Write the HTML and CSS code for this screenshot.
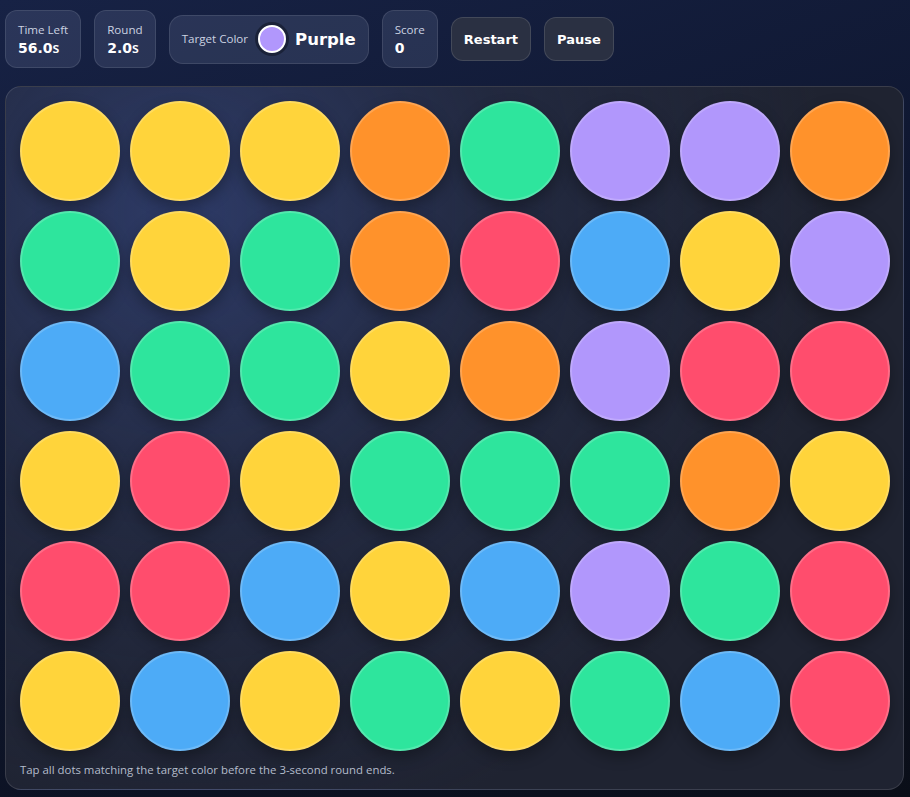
FILE: index.html
```html
<!doctype html>
<html lang="en">
<head>
    <meta charset="utf-8">
    <title>Color Tap</title>
    <link rel="stylesheet" href="styles.css">
</head>
<body>
    <div class="hud">
        <div class="stat">
            <div class="stat-label">Time Left</div>
            <div class="stat-value">56.0<small>s</small></div>
        </div>
        <div class="stat">
            <div class="stat-label">Round</div>
            <div class="stat-value">2.0<small>s</small></div>
        </div>
        <div class="target">
            <span class="stat-label">Target Color</span>
            <span class="target-swatch"></span>
            <span class="target-name">Purple</span>
        </div>
        <div class="stat">
            <div class="stat-label">Score</div>
            <div class="stat-value">0</div>
        </div>
        <button class="btn">Restart</button>
        <button class="btn">Pause</button>
    </div>

    <div class="board">
        <div class="grid">
            <div class="dot yellow"></div><div class="dot yellow"></div><div class="dot yellow"></div><div class="dot orange"></div><div class="dot green"></div><div class="dot purple"></div><div class="dot purple"></div><div class="dot orange"></div>
            <div class="dot green"></div><div class="dot yellow"></div><div class="dot green"></div><div class="dot orange"></div><div class="dot red"></div><div class="dot blue"></div><div class="dot yellow"></div><div class="dot purple"></div>
            <div class="dot blue"></div><div class="dot green"></div><div class="dot green"></div><div class="dot yellow"></div><div class="dot orange"></div><div class="dot purple"></div><div class="dot red"></div><div class="dot red"></div>
            <div class="dot yellow"></div><div class="dot red"></div><div class="dot yellow"></div><div class="dot green"></div><div class="dot green"></div><div class="dot green"></div><div class="dot orange"></div><div class="dot yellow"></div>
            <div class="dot red"></div><div class="dot red"></div><div class="dot blue"></div><div class="dot yellow"></div><div class="dot blue"></div><div class="dot purple"></div><div class="dot green"></div><div class="dot red"></div>
            <div class="dot yellow"></div><div class="dot blue"></div><div class="dot yellow"></div><div class="dot green"></div><div class="dot yellow"></div><div class="dot green"></div><div class="dot blue"></div><div class="dot red"></div>
        </div>
        <p class="hint">Tap all dots matching the target color before the 3-second round ends.</p>
    </div>
</body>
</html>
```

FILE: styles.css
```css
html, body {
    height: 100%;
}

body {
    margin: 0;
    padding: 10px 6px 0 5px;
    box-sizing: border-box;
    background: linear-gradient(160deg, #172245 0%, #0f1730 45%, #0a0e18 100%);
    color: #f1f5f9;
    font-family: "Open Sans", "Noto Sans", sans-serif;
}

.hud {
    display: flex;
    align-items: center;
    gap: 13px;
    height: 58px;
}

.stat {
    box-sizing: border-box;
    height: 58px;
    padding: 10px 12px;
    background: rgba(148, 163, 200, 0.16);
    border: 1px solid rgba(255, 255, 255, 0.1);
    border-radius: 12px;
}

.stat-label {
    font-size: 11.6px;
    color: #cbd2e1;
    line-height: 18px;
}

.stat-value {
    font-family: "DejaVu Sans", sans-serif;
    font-size: 14px;
    font-weight: bold;
    line-height: 18px;
    color: #fff;
}

.stat-value small {
    font-family: "Open Sans", sans-serif;
    font-weight: 600;
    font-size: 14px;
}

.target {
    box-sizing: border-box;
    height: 49px;
    display: flex;
    align-items: center;
    padding: 0 12px;
    background: rgba(148, 163, 200, 0.16);
    border: 1px solid rgba(255, 255, 255, 0.1);
    border-radius: 14px;
}

.target-swatch {
    width: 24px;
    height: 24px;
    margin: 0 9px 0 10px;
    border-radius: 50%;
    background: #b197fc;
    border: 2px solid #fff;
    box-shadow: 0 0 0 3px rgba(15, 20, 35, 0.55);
}

.target-name {
    font-family: "DejaVu Sans", sans-serif;
    font-weight: bold;
    font-size: 16.5px;
    color: #fff;
}

.btn {
    box-sizing: border-box;
    height: 44px;
    padding: 0 12px;
    background: #2a3042;
    border: 1px solid rgba(255, 255, 255, 0.12);
    border-radius: 12px;
    color: #fff;
    font-family: "DejaVu Sans", sans-serif;
    font-weight: bold;
    font-size: 13px;
}

.board {
    margin-top: 18px;
    padding: 14px 14px 11px 14px;
    border: 1px solid rgba(255, 255, 255, 0.12);
    border-radius: 16px;
    background:
        radial-gradient(circle at 20% 18%, rgba(50, 66, 120, 0.75) 0%, rgba(40, 52, 90, 0.35) 35%, rgba(30, 36, 52, 0) 70%),
        #1f2331;
}

.grid {
    display: grid;
    grid-template-columns: repeat(8, 100px);
    grid-auto-rows: 100px;
    gap: 10px;
}

.dot {
    box-sizing: border-box;
    border-radius: 50%;
    border: 2px solid rgba(255, 255, 255, 0.18);
    box-shadow: 0 6px 14px rgba(0, 0, 0, 0.3);
}

.yellow { background: #ffd43b; }
.orange { background: #ff922b; }
.green  { background: #2ee59d; }
.purple { background: #b197fc; }
.red    { background: #ff4d6d; }
.blue   { background: #4dabf7; }

.hint {
    margin: 11px 0 0 0;
    font-size: 11.4px;
    color: #b4bccb;
    line-height: 16px;
}
```
